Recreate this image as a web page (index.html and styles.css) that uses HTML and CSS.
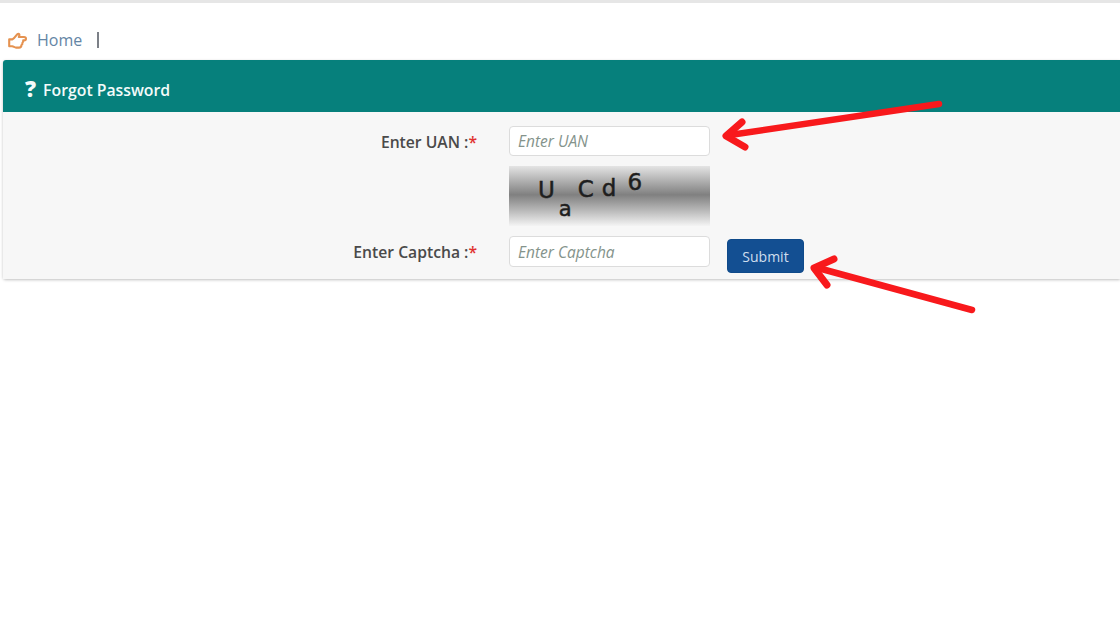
FILE: index.html
```html
<!DOCTYPE html>
<html lang="en">
<head>
  <meta charset="UTF-8" />
  <meta name="viewport" content="width=device-width, initial-scale=1.0"/>
  <title>Forgot Password</title>
  <link rel="stylesheet" href="styles.css">
</head>
<body>
  <div class="top-strip"></div>

  <div class="breadcrumb">
    <svg class="hand-icon" width="19" height="17" viewBox="0 0 19 17">
      <path d="M1.2 7.4 H4.4 C6.2 6.4 7.6 4.4 8.8 2.8 C9.4 1.4 11.6 1.2 11.4 3.2 L10.8 5 H16 C18.6 5 18.6 8.4 16 8.4 H15.2 C15.4 9.6 15 10.4 14.4 10.8 C14.6 12 14 12.8 13.4 13.2 C13.4 14.8 12.4 15.6 11 15.6 H8 C6.6 15.6 5.6 14.4 4.2 14.2 H1.2 Z" fill="none" stroke="#e59250" stroke-width="2.1" stroke-linejoin="round"/>
    </svg>
    <a class="home-link" href="#">Home</a>
    <span class="divider"></span>
  </div>

  <div class="panel">
    <div class="panel-heading"><span class="qmark">?</span> Forgot Password</div>
    <div class="panel-body">
      <div class="form-grid">
        <label class="field-label" for="uan">Enter UAN :<span class="req">*</span></label>
        <input class="field-input" type="text" id="uan" placeholder="Enter UAN" />
        <span></span>

        <span></span>
        <div class="captcha">
          <span class="ch ch-u">U</span>
          <span class="ch ch-a">a</span>
          <span class="ch ch-c">C</span>
          <span class="ch ch-d">d</span>
          <span class="ch ch-6">6</span>
        </div>
        <span></span>

        <label class="field-label" for="captcha">Enter Captcha :<span class="req">*</span></label>
        <input class="field-input captcha-input" type="text" id="captcha" placeholder="Enter Captcha" />
        <button class="submit-btn">Submit</button>
      </div>
    </div>
  </div>

  <!-- red arrows drawn on top of the screenshot -->
  <svg class="arrows" width="1120" height="630" viewBox="0 0 1120 630">
    <g fill="none" stroke="#f8191c" stroke-linecap="round" stroke-linejoin="round">
      <path d="M939 104 L730 135" stroke-width="6.5"/>
      <path d="M742 122 L726 136 L745 147" stroke-width="7"/>
      <path d="M972 310 L818 268" stroke-width="6.5"/>
      <path d="M834 259 L814 268 L827 285" stroke-width="7"/>
    </g>
  </svg>
</body>
</html>
```

FILE: styles.css
```css
body {
  margin: 0;
  height: 630px;
  overflow: hidden;
  background: #fff;
  color: #444;
  font-family: "Open Sans", sans-serif;
  position: relative;
}

.top-strip {
  height: 3px;
  background: #e6e6e6;
}

.breadcrumb {
  display: flex;
  align-items: center;
  height: 57px;
  padding-left: 8px;
  padding-top: 17px;
  box-sizing: border-box;
}

.home-link {
  margin-left: 10px;
  font-size: 16px;
  color: #6485a5;
  text-decoration: none;
}

.divider {
  width: 2px;
  height: 16px;
  margin-left: 15px;
  background: #7c8087;
}

.panel {
  margin-left: 3px;
  border-radius: 3px 0 0 3px;
  box-shadow: 0 1px 3px rgba(0,0,0,0.25);
}

.panel-heading {
  height: 52px;
  padding: 8px 0 0 22px;
  box-sizing: border-box;
  display: flex;
  align-items: center;
  gap: 7px;
  background: #06807c;
  color: #f2fbfa;
  font-size: 15.8px;
  font-weight: 600;
  border-radius: 3px 0 0 0;
}

.qmark {
  font-size: 22px;
  font-weight: 800;
  margin-top: -5px;
}

.panel-body {
  height: 167px;
  padding-top: 14px;
  box-sizing: border-box;
  background: #f7f7f7;
}

.form-grid {
  display: grid;
  grid-template-columns: 474px 201px auto;
  column-gap: 32px;
  row-gap: 10px;
  align-items: start;
  justify-content: start;
}

.form-grid > :nth-child(3n) {
  margin-left: -15px;
}

.field-label {
  height: 30px;
  text-align: right;
  font-size: 15.7px;
  line-height: 32px;
  font-weight: 600;
  color: #4a4a4a;
}

.req {
  color: #e0322f;
}

.field-input {
  width: 100%;
  height: 30px;
  padding: 0 8px;
  box-sizing: border-box;
  border: 1px solid #dcdcdc;
  border-radius: 4px;
  background: #fff;
  font-family: "Open Sans", sans-serif;
  font-size: 15.5px;
  font-style: italic;
}

.captcha-input {
  height: 31px;
}

.field-input::placeholder {
  color: #84938b;
  opacity: 1;
}

.captcha {
  height: 60px;
  display: flex;
  padding-left: 29px;
  background: linear-gradient(to bottom, #e4e4e4 0%, #808080 48%, #b4b4b4 72%, #f4f4f4 100%);
  font-family: "DejaVu Sans", sans-serif;
  color: #1e1e1e;
  font-size: 23px;
  line-height: 26px;
  -webkit-text-stroke: 0.5px #1e1e1e;
}

.ch-u { margin-top: 11px; }
.ch-a { margin: 30px 0 0 4px; font-size: 21px; }
.ch-c { margin: 10px 0 0 6px; }
.ch-d { margin: 9px 0 0 8px; }
.ch-6 { margin: 3px 0 0 11px; }

.submit-btn {
  justify-self: start;
  width: 77px;
  height: 34px;
  margin-top: 3px;
  border: 1px solid #0f4a8a;
  border-radius: 4px;
  background: #134f92;
  color: #cfdeee;
  font-family: "Open Sans", sans-serif;
  font-size: 14px;
  font-weight: 500;
}

/* overlay, the arrows sit on top of the form */
.arrows {
  position: absolute;
  top: 0;
  left: 0;
}
```
